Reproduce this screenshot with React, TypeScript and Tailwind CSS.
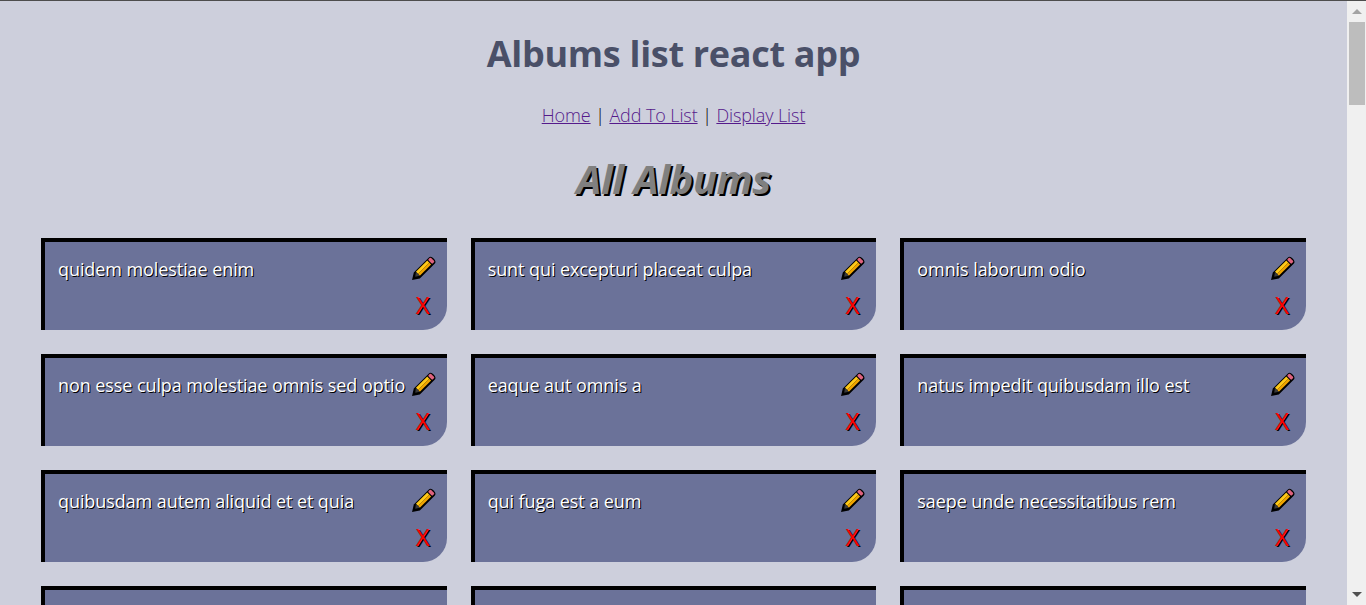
const albums = [
  "quidem molestiae enim",
  "sunt qui excepturi placeat culpa",
  "omnis laborum odio",
  "non esse culpa molestiae omnis sed optio",
  "eaque aut omnis a",
  "natus impedit quibusdam illo est",
  "quibusdam autem aliquid et et quia",
  "qui fuga est a eum",
  "saepe unde necessitatibus rem",
  "",
  "",
  "",
];

const font = "font-['Open_Sans','Noto_Sans',sans-serif]";

const PencilIcon = () => (
  <svg width="28" height="28" viewBox="0 0 28 28" className="shrink-0 -mx-[1px]">
    <g transform="rotate(45 14 14)">
      <path d="M10 2 Q10 -1 14 -1 Q18.5 -1 18.5 2 V23 L14 29.5 L10 23 Z" fill="#000" />
      <rect x="11" y="0.5" width="6" height="3.5" rx="1" fill="#e0627f" />
      <path d="M11 5 H14 V21 H11 Z" fill="#ffc917" />
      <path d="M14 5 H16.5 V21 H14 Z" fill="#f0a400" />
      <path d="M11 21 H16.5 L14 25 Z" fill="#3a3a3a" />
    </g>
  </svg>
);

const AlbumCard = ({ title }: { title: string }) => {
  return (
    <div className="h-[92px] border-t-4 border-l-4 border-black bg-[#6b7299] rounded-br-[24px] pl-[13px] pr-[11px] pt-[14px] flex justify-between">
      <p className="text-white text-[18px] leading-[26px] tracking-[-0.08px] whitespace-nowrap [text-shadow:1px_1px_0_#000]">
        {title}
      </p>
      {title && (
        <div className="flex flex-col items-center w-[26px] -mt-[1px]">
          <PencilIcon />
          <span className="mt-[9px] text-[#ff0000] text-[24px] leading-[26px] [text-shadow:1.5px_1px_0_#000]">
            X
          </span>
        </div>
      )}
    </div>
  );
};

const Scrollbar = () => {
  return (
    <div className="w-[19px] shrink-0 h-full bg-[#f0f0f0] flex flex-col items-center pl-[1px]">
      <div className="h-[21px] flex items-center justify-center shrink-0">
        <div className="w-0 h-0 border-l-[5px] border-r-[5px] border-b-[5px] border-l-transparent border-r-transparent border-b-[#a3a3a3]" />
      </div>
      <div className="w-[16px] h-[83px] bg-[#bdbdbd]" />
      <div className="mt-auto h-[21px] flex items-center justify-center shrink-0">
        <div className="w-0 h-0 border-l-[5px] border-r-[5px] border-t-[5px] border-l-transparent border-r-transparent border-t-[#505050]" />
      </div>
    </div>
  );
};

export default function App() {
  return (
    <div className={`h-[605px] overflow-hidden flex border-t border-[#4d4d4d] bg-[#cdcfdc] ${font}`}>
      <div className="flex-1 min-w-0 h-full overflow-hidden">
        <h1 className="mt-[28px] text-center text-[#4a5068] text-[36px] leading-[50px] font-bold tracking-[-0.3px]">
          Albums list react app
        </h1>
        <nav className="mt-[23px] text-center text-[18px] leading-[26px] font-light tracking-[-0.1px] text-black">
          <a href="#" className="underline text-[#551a8b]">Home</a> |{" "}
          <a href="#" className="underline text-[#551a8b]">Add To List</a> |{" "}
          <a href="#" className="underline text-[#551a8b]">Display List</a>
        </nav>
        <h2 className="mt-[27px] text-center text-[#808080] text-[40px] leading-[48px] font-bold italic tracking-[-0.5px] [text-shadow:2px_2px_0_#000]">
          All Albums
        </h2>
        <div className="mt-[35px] px-[41px] grid grid-cols-3 gap-x-[24px] gap-y-[24px]">
          {albums.map((title, i) => (
            <AlbumCard key={i} title={title} />
          ))}
        </div>
      </div>
      <Scrollbar />
    </div>
  );
}
